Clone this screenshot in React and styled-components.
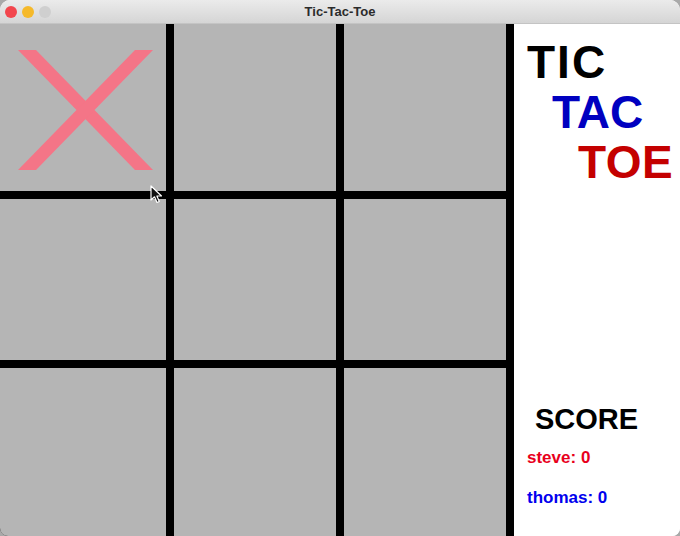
import React from "react";
import styled, { createGlobalStyle } from "styled-components";

const GlobalStyle = createGlobalStyle`
	html, body {
		margin: 0;
		padding: 0;
		background: #a9a9a9;
		font-family: "Liberation Sans", Arial, sans-serif;
	}
`;

const board = [
	["X", "", ""],
	["", "", ""],
	["", "", ""],
];

const players = [
	{ name: "steve", score: 0, color: "#e8001c" },
	{ name: "thomas", score: 0, color: "#0000ee" },
];

const Cross = () => (
	<svg width="166" height="167" viewBox="0 0 166 167">
		<g fill="#f47587">
			<polygon points="18,26 36,26 153,146 135,146" />
			<polygon points="135,26 153,26 36,146 18,146" />
		</g>
	</svg>
);

const Pointer = () => (
	<svg width="14" height="20" viewBox="0 0 14 20">
		<path
			d="M1 1 L1 15 L4.5 11.8 L7 17.5 L9.3 16.5 L6.9 11 L11.5 11 Z"
			fill="#111"
			stroke="#fff"
			strokeWidth="1.2"
			strokeLinejoin="round"
		/>
	</svg>
);

const App = () => {
	return (
		<>
			<GlobalStyle />
			<Window>
				<TitleBar>
					<Lights>
						<Light color="#f2464d" />
						<Light color="#f5b92a" />
						<Light color="#cfcfcf" />
					</Lights>
					<Title>Tic-Tac-Toe</Title>
				</TitleBar>
				<Content>
					<Board>
						{board.map((row, r) =>
							row.map((cell, c) => (
								<Cell key={`${r}-${c}`}>{cell === "X" && <Cross />}</Cell>
							))
						)}
						<Cursor>
							<Pointer />
						</Cursor>
					</Board>
					<Side>
						<Heading color="#000" indent={0} spacing={2}>
							TIC
						</Heading>
						<Heading color="#0000c0" indent={25} spacing={0}>
							TAC
						</Heading>
						<Heading color="#c40000" indent={51} spacing={0.5}>
							TOE
						</Heading>
						<Score>
							<ScoreTitle>SCORE</ScoreTitle>
							{players.map((p) => (
								<PlayerLine key={p.name} color={p.color}>
									{p.name}: {p.score}
								</PlayerLine>
							))}
						</Score>
					</Side>
				</Content>
			</Window>
		</>
	);
};

export default App;

const Window = styled.div`
	width: 680px;
	height: 536px;
	display: flex;
	flex-direction: column;
	border-radius: 10px 10px 8px 8px;
	overflow: hidden;
	background: #fff;
`;

const TitleBar = styled.div`
	height: 24px;
	flex: none;
	position: relative;
	display: flex;
	align-items: center;
	justify-content: center;
	background: linear-gradient(#ebebeb, #d5d5d5);
	border-bottom: 1px solid #c4c4c4;
	box-sizing: border-box;
`;

const Lights = styled.div`
	position: absolute;
	left: 5px;
	top: 6px;
	display: flex;
	gap: 5px;
`;

const Light = styled.span`
	width: 12px;
	height: 12px;
	border-radius: 50%;
	background: ${(p) => p.color};
`;

const Title = styled.div`
	font-size: 13px;
	font-weight: 700;
	color: #2b2b2b;
`;

const Content = styled.div`
	flex: 1;
	display: flex;
`;

const Board = styled.div`
	position: relative;
	width: 514px;
	display: grid;
	grid-template-columns: 166px 162px 162px;
	grid-template-rows: 167px 161px 1fr;
	gap: 8px;
	padding-right: 8px;
	box-sizing: border-box;
	background: #000;
`;

const Cell = styled.div`
	background: #b5b5b5;
	overflow: hidden;
`;

const Cursor = styled.div`
	position: absolute;
	left: 150px;
	top: 161px;
	line-height: 0;
`;

const Side = styled.div`
	flex: 1;
	display: flex;
	flex-direction: column;
	padding: 13px 0 30px 13px;
	background: #fff;
`;

const Heading = styled.div`
	font-size: 46px;
	line-height: 50px;
	font-weight: 700;
	color: ${(p) => p.color};
	padding-left: ${(p) => p.indent}px;
	letter-spacing: ${(p) => p.spacing}px;
`;

const Score = styled.div`
	margin-top: auto;
	display: flex;
	flex-direction: column;
`;

const ScoreTitle = styled.div`
	font-size: 29px;
	line-height: 29px;
	font-weight: 700;
	color: #000;
	padding-left: 8px;
	margin-bottom: 15px;
`;

const PlayerLine = styled.div`
	font-size: 17px;
	line-height: 17px;
	font-weight: 700;
	color: ${(p) => p.color};
	& + & {
		margin-top: 23px;
	}
`;
